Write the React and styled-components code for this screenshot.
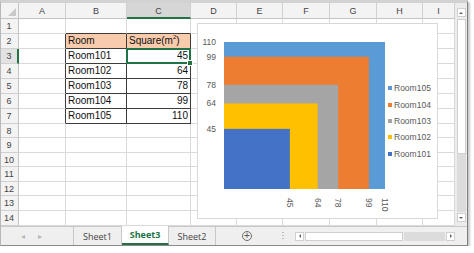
import React from "react";
import styled, { createGlobalStyle, css } from "styled-components";

const Global = createGlobalStyle`
  html, body { margin: 0; padding: 0; background: #ffffff; }
  body { font-family: "Liberation Sans", Arial, sans-serif; }
`;

const GREEN = "#217346";
const GRID = "#dadada";
const DARK = "#3c3c3c";

const Window = styled.div`
  width: 466px;
  border-top: 3px solid #d2d2d2;
  border-left: 1px solid #b8b8b8;
  border-right: 1px solid #7d7d7d;
  border-bottom: 1px solid #8a8a8a;
  box-shadow: 2px 2px 2px rgba(0, 0, 0, 0.22);
  background: #fff;
  display: flex;
  flex-direction: column;
`;

const Main = styled.div`
  display: flex;
`;

const Sheet = styled.div`
  position: relative;
  display: grid;
  grid-template-columns: 18px 47px 61px 64px 46px 46px 47px 47px 46px 32px;
  grid-template-rows: 16px repeat(7, 15px) 14px 15px 14px 15px 14px 15px 15px;
  width: 454px;
  overflow: hidden;
`;

const Corner = styled.div`
  position: relative;
  background: #f3f3f3;
  border-right: 1px solid #c4c4c4;
  border-bottom: 1px solid #c4c4c4;
  box-sizing: border-box;
  &::after {
    content: "";
    position: absolute;
    right: 2px;
    bottom: 2px;
    width: 0;
    height: 0;
    border-left: 8px solid transparent;
    border-bottom: 8px solid #c9c9c9;
  }
`;

const ColHead = styled.div`
  box-sizing: border-box;
  background: ${(p) => (p.$active ? "#d6d6d6" : "#f3f3f3")};
  border-right: 1px solid #d0d0d0;
  border-bottom: ${(p) => (p.$active ? `2px solid ${GREEN}` : "1px solid #c4c4c4")};
  font-size: 9px;
  color: #444;
  display: flex;
  align-items: center;
  justify-content: center;
  padding-top: ${(p) => (p.$active ? "1px" : "0")};
`;

const RowHead = styled.div`
  box-sizing: border-box;
  background: ${(p) => (p.$active ? "#e2e2e2" : "#f3f3f3")};
  border-bottom: 1px solid #d0d0d0;
  border-right: ${(p) => (p.$active ? `2px solid ${GREEN}` : "1px solid #c4c4c4")};
  font-size: 9px;
  color: #444;
  display: flex;
  align-items: center;
  justify-content: center;
  padding-right: ${(p) => (p.$active ? "0" : "1px")};
`;

const Cell = styled.div`
  position: relative;
  box-sizing: border-box;
  background: ${(p) => p.$fill || "#fff"};
  border-right: 1px solid ${(p) => (p.$darkRight ? DARK : GRID)};
  border-bottom: 1px solid ${(p) => (p.$darkBottom ? DARK : GRID)};
  font-size: 10px;
  line-height: 1;
  color: #111;
  display: flex;
  align-items: flex-end;
  justify-content: ${(p) => (p.$num ? "flex-end" : "flex-start")};
  padding: 0 2px 2px 2px;
  white-space: nowrap;
  ${(p) =>
    p.$selected &&
    css`
      &::after {
        content: "";
        position: absolute;
        left: -1px;
        top: -1px;
        right: -1px;
        bottom: -1px;
        border: 2px solid ${GREEN};
        pointer-events: none;
      }
      &::before {
        content: "";
        position: absolute;
        right: -3px;
        bottom: -3px;
        width: 4px;
        height: 4px;
        background: ${GREEN};
        border: 1px solid #fff;
        z-index: 2;
      }
    `}
`;

const Sup = styled.sup`
  font-size: 6px;
  line-height: 0;
  vertical-align: 5px;
`;

const ChartBox = styled.div`
  position: absolute;
  left: 196px;
  top: 20px;
  width: 241px;
  height: 196px;
  box-sizing: border-box;
  background: #fff;
  border: 1px solid #d9d9d9;
  display: flex;
  z-index: 3;
`;

const Plot = styled.svg`
  display: block;
  flex: none;
  overflow: visible;
`;

const AxisText = styled.text`
  font-family: "Liberation Sans", Arial, sans-serif;
  font-size: 8.5px;
  fill: #595959;
`;

const Legend = styled.div`
  display: flex;
  flex-direction: column;
  justify-content: center;
  flex: 1;
`;

const LegendItem = styled.div`
  display: flex;
  align-items: center;
  gap: 2px;
  height: 16.3px;
  font-size: 8.5px;
  color: #595959;
`;

const Swatch = styled.span`
  width: 4px;
  height: 4px;
  background: ${(p) => p.$color};
  flex: none;
`;

const VScroll = styled.div`
  width: 12px;
  background: #ececec;
  display: flex;
  flex-direction: column;
  align-items: center;
  padding-top: 5px;
  padding-bottom: 4px;
  box-sizing: border-box;
`;

const ArrowBtn = styled.div`
  width: 9px;
  height: 9px;
  box-sizing: border-box;
  background: #fff;
  border: 1px solid #cfcfcf;
  display: flex;
  align-items: center;
  justify-content: center;
  flex: none;
  &::after {
    content: "";
    width: 0;
    height: 0;
    ${(p) =>
      p.$dir === "up"
        ? css`
            border-left: 2px solid transparent;
            border-right: 2px solid transparent;
            border-bottom: 2px solid #606060;
          `
        : p.$dir === "down"
        ? css`
            border-left: 2px solid transparent;
            border-right: 2px solid transparent;
            border-top: 2px solid #606060;
          `
        : p.$dir === "left"
        ? css`
            border-top: 2px solid transparent;
            border-bottom: 2px solid transparent;
            border-right: 2px solid #606060;
          `
        : css`
            border-top: 2px solid transparent;
            border-bottom: 2px solid transparent;
            border-left: 2px solid #606060;
          `}
  }
`;

const VThumb = styled.div`
  width: 9px;
  height: 135px;
  margin-top: 2px;
  box-sizing: border-box;
  background: #fff;
  border: 1px solid #cfcfcf;
  flex: none;
`;

const VTrack = styled.div`
  width: 9px;
  flex: 1;
  background: #dcdcdc;
  margin-bottom: 1px;
`;

const TabBar = styled.div`
  height: 19px;
  box-sizing: border-box;
  border-top: 1px solid #c8c8c8;
  background: #efefef;
  display: flex;
  align-items: stretch;
`;

const Nav = styled.div`
  width: 73px;
  box-sizing: border-box;
  border-right: 1px solid #c8c8c8;
  display: flex;
  align-items: center;
  gap: 13px;
  padding-left: 20px;
  font-size: 8px;
  color: #b8b8b8;
`;

const Tab = styled.div`
  width: ${(p) => p.$w}px;
  box-sizing: border-box;
  border-right: 1px solid #c8c8c8;
  display: flex;
  align-items: center;
  justify-content: center;
  font-family: "Open Sans", "Liberation Sans", sans-serif;
  font-size: 9px;
  color: #444;
  ${(p) =>
    p.$active &&
    css`
      background: #fff;
      color: ${GREEN};
      font-weight: 700;
      border-bottom: 2px solid ${GREEN};
      margin-top: -1px;
    `}
`;

const AddBtn = styled.div`
  margin-left: 26px;
  align-self: center;
  width: 10px;
  height: 10px;
  box-sizing: border-box;
  border: 1px solid #6e6e6e;
  border-radius: 50%;
  display: flex;
  align-items: center;
  justify-content: center;
  font-size: 10px;
  line-height: 1;
  color: #555;
`;

const Dots = styled.div`
  margin-left: 30px;
  align-self: center;
  width: 2px;
  height: 9px;
  background: repeating-linear-gradient(
    to bottom,
    #bdbdbd 0 1px,
    transparent 1px 3px
  );
`;

const HScroll = styled.div`
  margin-left: 11px;
  width: 160px;
  display: flex;
  align-items: center;
  gap: 1px;
`;

const HThumb = styled.div`
  width: 98px;
  height: 9px;
  box-sizing: border-box;
  background: #fff;
  border: 1px solid #cfcfcf;
`;

const HTrack = styled.div`
  flex: 1;
  height: 9px;
  background: #dcdcdc;
`;

const Spacer = styled.div`
  flex: 1;
`;

const cols = ["A", "B", "C", "D", "E", "F", "G", "H", "I"];
const rooms = [
  ["Room101", 45],
  ["Room102", 64],
  ["Room103", 78],
  ["Room104", 99],
  ["Room105", 110],
];
const series = [
  { name: "Room105", v: 110, color: "#5B9BD5" },
  { name: "Room104", v: 99, color: "#ED7D31" },
  { name: "Room103", v: 78, color: "#A5A5A5" },
  { name: "Room102", v: 64, color: "#FFC000" },
  { name: "Room101", v: 45, color: "#4472C4" },
];

function cellContent(r, c) {
  if (r === 2 && c === 1) return "Room";
  if (r === 2 && c === 2)
    return (
      <span>
        Square(m<Sup>2</Sup>)
      </span>
    );
  if (r >= 3 && r <= 7) {
    const d = rooms[r - 3];
    if (c === 1) return d[0];
    if (c === 2) return d[1];
  }
  return null;
}

function Chart() {
  const x0 = 26;
  const bottom = 165;
  const W = 161;
  const H = 147;
  return (
    <ChartBox>
      <Plot width="190" height="194" viewBox="0 0 190 194">
        {series.map((s) => {
          const w = (s.v / 110) * W;
          const h = (s.v / 110) * H;
          return (
            <rect key={s.name} x={x0} y={bottom - h} width={w} height={h} fill={s.color} />
          );
        })}
        {series.map((s) => {
          const h = (s.v / 110) * H;
          return (
            <AxisText key={"y" + s.name} x="18" y={bottom - h} textAnchor="end" dominantBaseline="central">
              {s.v}
            </AxisText>
          );
        })}
        {series.map((s) => {
          const w = (s.v / 110) * W;
          return (
            <AxisText
              key={"x" + s.name}
              transform={`translate(${x0 + w} 174) rotate(90)`}
              textAnchor="start"
              dominantBaseline="central"
            >
              {s.v}
            </AxisText>
          );
        })}
      </Plot>
      <Legend>
        {series.map((s) => (
          <LegendItem key={s.name}>
            <Swatch $color={s.color} />
            {s.name}
          </LegendItem>
        ))}
      </Legend>
    </ChartBox>
  );
}

export default function App() {
  const cells = [];
  cells.push(<Corner key="corner" />);
  cols.forEach((c, i) =>
    cells.push(
      <ColHead key={"h" + c} $active={i === 2}>
        {c}
      </ColHead>
    )
  );
  for (let r = 1; r <= 14; r++) {
    cells.push(
      <RowHead key={"r" + r} $active={r === 3}>
        {r}
      </RowHead>
    );
    for (let c = 0; c < 9; c++) {
      const inTable = r >= 2 && r <= 7 && (c === 1 || c === 2);
      const darkRight = inTable || (c === 0 && r >= 2 && r <= 7);
      const darkBottom = inTable || (r === 1 && (c === 1 || c === 2));
      cells.push(
        <Cell
          key={r + "-" + c}
          $fill={r === 2 && inTable ? "#F8CBAD" : undefined}
          $darkRight={darkRight}
          $darkBottom={darkBottom}
          $num={c === 2 && r >= 3}
          $selected={r === 3 && c === 2}
        >
          {cellContent(r, c)}
        </Cell>
      );
    }
  }

  return (
    <>
      <Global />
      <Window>
        <Main>
          <Sheet>
            {cells}
            <Chart />
          </Sheet>
          <VScroll>
            <ArrowBtn $dir="up" />
            <VThumb />
            <VTrack />
            <ArrowBtn $dir="down" />
          </VScroll>
        </Main>
        <TabBar>
          <Nav>
            <span>◂</span>
            <span>▸</span>
          </Nav>
          <Tab $w={48}>Sheet1</Tab>
          <Tab $w={47} $active>
            Sheet3
          </Tab>
          <Tab $w={47}>Sheet2</Tab>
          <AddBtn>+</AddBtn>
          <Dots />
          <HScroll>
            <ArrowBtn $dir="left" />
            <HThumb />
            <HTrack />
            <ArrowBtn $dir="right" />
          </HScroll>
          <Spacer />
        </TabBar>
      </Window>
    </>
  );
}
